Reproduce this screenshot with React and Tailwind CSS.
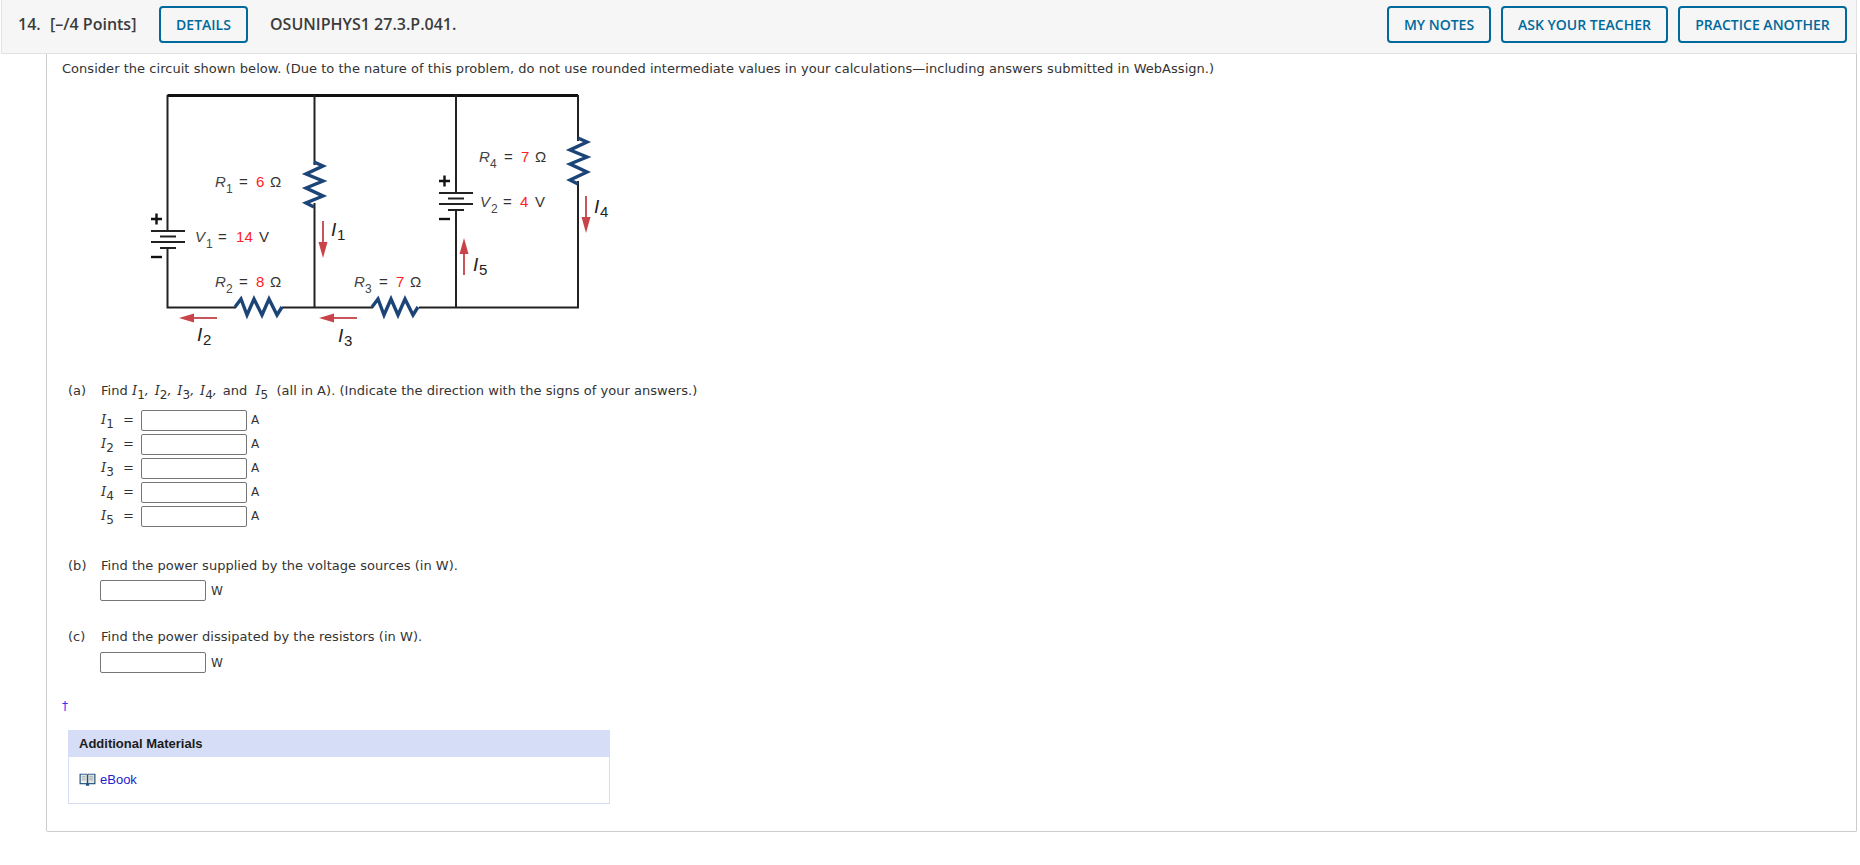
function Btn({ children, className = "" }) {
  return (
    <button className={"h-[37px] rounded-[4px] border-2 border-[#006a9c] text-[14px] font-semibold text-[#00699b] " + className}>
      {children}
    </button>
  );
}

function Zig({ d }) {
  return <path d={d} fill="none" stroke="#1d4477" strokeWidth="3.4" strokeLinejoin="miter" />;
}

function Arrow({ d, head }) {
  return (
    <g>
      <path d={d} stroke="#c9545a" strokeWidth="2" fill="none" />
      <polygon points={head} fill="#c8444a" />
    </g>
  );
}

function Value({ x, y, name, sub, val, unit, eqX, valX, unitX }) {
  return (
    <g fontFamily="'Liberation Sans', sans-serif" fontSize="15">
      <text x={x} y={y} fontStyle="italic" fill="#444">{name}</text>
      <text x={x + 11} y={y + 6} fontSize="12" fill="#444">{sub}</text>
      <text x={eqX} y={y} fill="#333">=</text>
      <text x={valX} y={y} fill="#f22">{val}</text>
      <text x={unitX} y={y} fill="#333">{unit}</text>
    </g>
  );
}

function Cur({ x, y, sub }) {
  return (
    <g fontFamily="'Liberation Sans', sans-serif" fill="#222">
      <text x={x} y={y} fontSize="19" fontStyle="italic">I</text>
      <text x={x + 6} y={y + 4} fontSize="15">{sub}</text>
    </g>
  );
}

function Battery({ x, y }) {
  return (
    <g stroke="#222" strokeWidth="2">
      <path d={`M${x - 17} ${y}H${x + 17}M${x - 17} ${y + 11}H${x + 17}`} />
      <path d={`M${x - 8} ${y + 5.5}H${x + 8}M${x - 8} ${y + 17}H${x + 8}`} />
      <path d={`M${x - 17} ${y - 12}h11M${x - 11.5} ${y - 17.5}v11`} strokeWidth="2.4" stroke="#111" />
      <path d={`M${x - 17} ${y + 26}h11`} strokeWidth="2.4" stroke="#111" />
    </g>
  );
}

function Circuit() {
  return (
    <svg viewBox="130 80 480 290" className="ml-[83px] block h-[290px] w-[480px]">
      <path d="M167.5 95.5H578" stroke="#111" strokeWidth="3" fill="none" />
      <path d="M167.5 95V231M167.5 248V307.5H578V95M314.5 95V307M456 95V193M456 209V307" stroke="#222" strokeWidth="2" fill="none" />
      <rect x="306" y="165" width="18" height="38" fill="#fff" />
      <rect x="569" y="141" width="18" height="40" fill="#fff" />
      <rect x="236" y="298" width="46" height="18" fill="#fff" />
      <rect x="373" y="298" width="46" height="18" fill="#fff" />
      <Zig d="M235 307L241 299L247 315L254 299L262 315L269 299L277 315L282 307" />
      <Zig d="M372 307L378 299L384 315L391 299L398 315L405 299L413 315L418 307" />
      <Zig d="M314 162L323 166L306 174L323 181L306 188L323 196L306 203L314 207" />
      <Zig d="M578 138L587 142L570 150L587 157L570 164L587 172L570 180L578 184" />
      <Battery x={168} y={231} />
      <Battery x={456} y={193} />
      <Arrow d="M323 221V244" head="318.5,242 327.5,242 323,258" />
      <Arrow d="M586 196V219" head="581.5,217 590.5,217 586,233" />
      <Arrow d="M464 275V252" head="459.5,254 468.5,254 464,238" />
      <Arrow d="M217 318H192" head="194,313.5 194,322.5 179,318" />
      <Arrow d="M357 318H332" head="334,313.5 334,322.5 319,318" />
      <Value x={215} y={187} name="R" sub="1" val="6" unit="Ω" eqX={239} valX={256} unitX={270} />
      <Value x={195} y={242} name="V" sub="1" val="14" unit="V" eqX={218} valX={236} unitX={259} />
      <Value x={215} y={287} name="R" sub="2" val="8" unit="Ω" eqX={239} valX={256} unitX={270} />
      <Value x={354} y={287} name="R" sub="3" val="7" unit="Ω" eqX={379} valX={396} unitX={410} />
      <Value x={479} y={162} name="R" sub="4" val="7" unit="Ω" eqX={504} valX={521} unitX={535} />
      <Value x={480} y={207} name="V" sub="2" val="4" unit="V" eqX={503} valX={520} unitX={535} />
      <Cur x={331} y={236} sub="1" />
      <Cur x={594} y={213} sub="4" />
      <Cur x={473} y={271} sub="5" />
      <Cur x={197} y={341} sub="2" />
      <Cur x={338} y={342} sub="3" />
    </svg>
  );
}

function MathI({ n, comma, className = "" }) {
  return (
    <span className={"whitespace-nowrap " + className}>
      <i className="font-['DejaVu_Serif',serif]">I</i>
      <sub className="relative top-[4px] text-[12px] leading-none">{n}</sub>
      {comma && <i>,</i>}
    </span>
  );
}

function AnswerBox() {
  return <input className="h-[21px] w-[106px] rounded-[2px] border border-[#767676] bg-white" />;
}

function CurrentRow({ n }) {
  return (
    <div className="flex h-[24px] items-center">
      <div className="w-[22px]"><MathI n={n} /></div>
      <div className="w-[18px]">=</div>
      <AnswerBox />
      <div className="ml-[4px] text-[12px]">A</div>
    </div>
  );
}

function Part({ label, children }) {
  return (
    <div className="flex h-[18px] items-center">
      <div className="w-[40px] pl-[7px]">{label}</div>
      <div>{children}</div>
    </div>
  );
}

function Book() {
  return (
    <svg viewBox="0 0 16 14" className="h-[15px] w-[17px]">
      <path d="M0.5 1.5H7.5L8 2.2L8.5 1.5H15.5V11.5H9.5V12.8H6.5V11.5H0.5Z" fill="#1f4f7c" />
      <rect x="1.6" y="2.4" width="5.7" height="8" fill="#f1f1ec" />
      <rect x="8.7" y="2.4" width="5.7" height="8" fill="#e6e6e0" />
      <path d="M2.6 4H6.3M2.6 5.7H6.3M2.6 7.4H6.3M9.7 4H13.4M9.7 5.7H13.4M9.7 7.4H13.4" stroke="#9aa0a4" strokeWidth="0.8" />
    </svg>
  );
}

export default function App() {
  return (
    <div className="min-h-[865px] bg-white">
      <header className="ml-[1px] mr-[3px] flex h-[54px] items-center border border-t-0 border-[#e2e2e2] bg-[#f6f6f6] pb-[5px] pr-[9px] font-['Open_Sans',sans-serif] text-[16px] font-semibold text-[#3c3c3c]">
        <span className="ml-[16px] w-[32px]">14.</span>
        <span className="w-[109px]">[–/4 Points]</span>
        <Btn className="w-[89px]">DETAILS</Btn>
        <span className="ml-[22px]">OSUNIPHYS1 27.3.P.041.</span>
        <div className="ml-auto flex gap-[10px]">
          <Btn className="w-[104px]">MY NOTES</Btn>
          <Btn className="w-[167px]">ASK YOUR TEACHER</Btn>
          <Btn className="w-[169px]">PRACTICE ANOTHER</Btn>
        </div>
      </header>

      <main className="ml-[46px] mr-[3px] h-[778px] rounded-b-[2px] border border-t-0 border-[#cccccc] font-['DejaVu_Sans',sans-serif] text-[13px] tracking-[0.035px] text-[#333333]">
        <p className="ml-[15px] flex h-[26px] items-center pt-[3px]">
          Consider the circuit shown below. (Due to the nature of this problem, do not use rounded intermediate values in your calculations—including answers submitted in WebAssign.)
        </p>
        <Circuit />

        <div className="ml-[14px] mt-[12px]">
          <Part label="(a)">
            Find <MathI n="1" comma className="mr-[1.5px]" /> <MathI n="2" comma className="mr-[1.5px]" /> <MathI n="3" comma className="mr-[1.5px]" /> <MathI n="4" comma className="mr-[1.5px]" /> and <MathI n="5" className="ml-[4px] mr-[4px]" /> (all in A). (Indicate the direction with the signs of your answers.)
          </Part>
          <div className="ml-[40px] mt-[8px]">
            <CurrentRow n="1" />
            <CurrentRow n="2" />
            <CurrentRow n="3" />
            <CurrentRow n="4" />
            <CurrentRow n="5" />
          </div>

          <div className="mt-[29px]">
            <Part label="(b)">Find the power supplied by the voltage sources (in W).</Part>
          </div>
          <div className="ml-[39px] mt-[5px] flex items-center">
            <AnswerBox />
            <span className="ml-[5px] text-[12px]">W</span>
          </div>

          <div className="mt-[27px]">
            <Part label="(c)">Find the power dissipated by the resistors (in W).</Part>
          </div>
          <div className="ml-[39px] mt-[6px] flex items-center">
            <AnswerBox />
            <span className="ml-[5px] text-[12px]">W</span>
          </div>
        </div>

        <div className="ml-[15px] mt-[24px] h-[18px] text-[12px] leading-[18px] text-[#3333ff]">†</div>

        <section className="ml-[21px] mt-[15px] h-[74px] w-[542px] border border-[#d6ddf7] font-['Liberation_Sans',sans-serif] tracking-normal">
          <h3 className="flex h-[26px] items-center bg-[#d6ddf7] pl-[10px] text-[13px] font-bold text-[#1c1c1c]">Additional Materials</h3>
          <div className="mt-[13px] flex items-center gap-[4px] pl-[10px] text-[13px] text-[#2222cc]">
            <Book />
            eBook
          </div>
        </section>
      </main>
    </div>
  );
}
